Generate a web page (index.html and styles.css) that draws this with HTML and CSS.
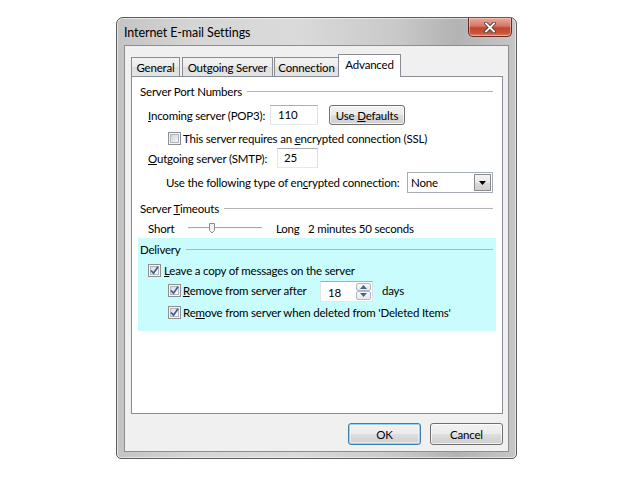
FILE: index.html
```html
<!DOCTYPE html>
<html lang="en">

<head>
    <meta charset="UTF-8">
    <meta name="viewport" content="width=device-width, initial-scale=1.0">
    <title>Internet E-mail Settings</title>
    <link rel="stylesheet" href="styles.css">
</head>

<body>
    <div class="window">
        <div class="titlebar">
            <span class="title">Internet E-mail Settings</span>
            <button type="button" class="close">
                <svg width="12" height="11" viewBox="0 0 12 11">
                    <path d="M2 1.5 L10 9.5 M10 1.5 L2 9.5" stroke="#4a3a38" stroke-width="3.6" stroke-linecap="square" fill="none" />
                    <path d="M2 1.5 L10 9.5 M10 1.5 L2 9.5" stroke="#ffffff" stroke-width="1.9" stroke-linecap="square" fill="none" />
                </svg>
            </button>
        </div>

        <div class="client">
            <div class="tabs">
                <div class="tab tab-general">General</div>
                <div class="tab tab-outgoing">Outgoing Server</div>
                <div class="tab tab-connection">Connection</div>
                <div class="tab tab-advanced active">Advanced</div>
            </div>

            <div class="page">
                <!-- ports -->
                <div class="section">
                    <div class="group-head"><span>Server Port Numbers</span></div>
                    <div class="row row-incoming ind1">
                        <label class="lbl-incoming"><u>I</u>ncoming server (POP3):</label>
                        <div class="textbox tb-incoming">110</div>
                        <button type="button" class="btn btn-defaults">Use <u>D</u>efaults</button>
                    </div>
                    <div class="row row-ssl ind2">
                        <span class="check"><span class="check-inner"></span></span>
                        <span class="check-text">This server requires an <u>e</u>ncrypted connection (SSL)</span>
                    </div>
                    <div class="row row-outgoing ind1">
                        <label class="lbl-outgoing"><u>O</u>utgoing server (SMTP):</label>
                        <div class="textbox tb-outgoing">25</div>
                    </div>
                    <div class="row row-enc ind3">
                        <label class="lbl-enc">Use the following type of en<u>c</u>rypted connection:</label>
                        <div class="select">
                            <span class="select-value">None</span>
                            <span class="select-btn">
                                <svg width="7" height="4" viewBox="0 0 7 4"><path d="M0 0 H7 L3.5 4 Z" fill="#000" /></svg>
                            </span>
                        </div>
                    </div>
                </div>

                <!-- timeouts -->
                <div class="section section-timeouts">
                    <div class="group-head"><span>Server <u>T</u>imeouts</span></div>
                    <div class="row row-slider ind1">
                        <span class="lbl-short">Short</span>
                        <span class="slider">
                            <svg width="74" height="14" viewBox="0 0 74 14">
                                <rect x="0" y="5" width="74" height="1" fill="#a7a7a7" />
                                <rect x="0" y="6" width="74" height="1" fill="#f4f4f4" />
                                <path d="M21.5 1.5 H26.5 V8.5 L24 11 L21.5 8.5 Z" fill="#f3f3f3" stroke="#8c8c8c" />
                            </svg>
                        </span>
                        <span class="lbl-long">Long</span>
                        <span>2 minutes 50 seconds</span>
                    </div>
                </div>

                <!-- delivery -->
                <div class="section section-delivery">
                    <div class="group-head"><span>Delivery</span></div>
                    <div class="row row-leave ind1">
                        <span class="check checked"><span class="check-inner">
                            <svg width="9" height="9" viewBox="0 0 9 9"><path d="M1 4.5 L3.5 7.2 L8 0.8" stroke="#3e5a8f" stroke-width="1.7" fill="none" /></svg>
                        </span></span>
                        <span class="check-text check-text-leave"><u>L</u>eave a copy of messages on the server</span>
                    </div>
                    <div class="row row-remove ind2">
                        <span class="check checked"><span class="check-inner">
                            <svg width="9" height="9" viewBox="0 0 9 9"><path d="M1 4.5 L3.5 7.2 L8 0.8" stroke="#3e5a8f" stroke-width="1.7" fill="none" /></svg>
                        </span></span>
                        <span class="check-text lbl-remove"><u>R</u>emove from server after</span>
                        <div class="spinner">
                            <span class="spinner-value">18</span>
                            <span class="spin-btns">
                                <span class="spin-btn"><svg width="7" height="4" viewBox="0 0 7 4"><path d="M0 4 H7 L3.5 0 Z" fill="#4d6185" /></svg></span>
                                <span class="spin-btn"><svg width="7" height="4" viewBox="0 0 7 4"><path d="M0 0 H7 L3.5 4 Z" fill="#4d6185" /></svg></span>
                            </span>
                        </div>
                        <span class="lbl-days">days</span>
                    </div>
                    <div class="row row-deleted ind2">
                        <span class="check checked"><span class="check-inner">
                            <svg width="9" height="9" viewBox="0 0 9 9"><path d="M1 4.5 L3.5 7.2 L8 0.8" stroke="#3e5a8f" stroke-width="1.7" fill="none" /></svg>
                        </span></span>
                        <span class="check-text">Re<u>m</u>ove from server when deleted from 'Deleted Items'</span>
                    </div>
                </div>
            </div>

            <div class="footer">
                <button type="button" class="btn btn-ok">OK</button>
                <button type="button" class="btn btn-cancel">Cancel</button>
            </div>
        </div>
    </div>
</body>

</html>
```

FILE: styles.css
```css
* {
    box-sizing: border-box;
}

body {
    margin: 0;
    padding: 17px 0 0 116px;
    background-color: #ffffff;
    font-family: Lato, "Liberation Sans", sans-serif;
    font-size: 11.5px;
    letter-spacing: -0.2px;
    color: #000;
    white-space: nowrap;
}

u {
    text-decoration: underline;
    text-underline-offset: 1px;
}

button {
    font-family: inherit;
    font-size: 11.5px;
    letter-spacing: -0.2px;
    color: #000;
    padding: 0;
}

/* window frame */
.window {
    width: 401px;
    height: 442px;
    border: 1px solid #5c5c5c;
    border-radius: 7px 7px 5px 5px;
    padding: 0 7px 6px 7px;
    background: linear-gradient(to right, #c4c4c4 0%, #d6d6d6 20%, #dadada 45%, #c9c9c9 70%, #b3b3b3 85%, #c6c6c6 100%);
    box-shadow: inset 0 0 0 1px rgba(255, 255, 255, 0.55);
    display: flex;
    flex-direction: column;
}

.titlebar {
    height: 27px;
    display: flex;
    align-items: flex-start;
}

.title {
    padding-top: 7px;
    font-size: 12.5px;
    letter-spacing: -0.1px;
    color: #000;
}

.close {
    margin-left: auto;
    margin-right: -3px;
    width: 44px;
    height: 19px;
    border: 1px solid #6a2b22;
    border-top: none;
    border-radius: 0 0 5px 5px;
    background: linear-gradient(to bottom, #e9a99b 0%, #d47866 45%, #c2452f 55%, #c8553c 85%, #de8d6f 100%);
    box-shadow: inset 0 0 0 1px rgba(255, 220, 210, 0.45);
    display: flex;
    align-items: center;
    justify-content: center;
}

.client {
    width: 385px;
    height: 407px;
    border: 1px solid #8d8d8d;
    background-color: #f0f0f0;
    padding: 8px 5px 0 6px;
}

/* tabs */
.tabs {
    display: flex;
    align-items: flex-end;
    height: 22px;
    position: relative;
    z-index: 1;
}

.tab {
    height: 19px;
    border: 1px solid #898c95;
    border-bottom: none;
    background: linear-gradient(to bottom, #f3f3f3 0%, #ebebeb 50%, #dedede 51%, #e5e5e5 100%);
    text-align: center;
    line-height: 18px;
    padding-top: 1px;
}

.tab-general {
    width: 49px;
}

.tab-outgoing {
    width: 91px;
    margin-left: 2px;
}

.tab-connection {
    width: 65px;
    margin-left: 1px;
}

.tab.active {
    width: 63px;
    height: 23px;
    margin-left: -1px;
    margin-bottom: -1px;
    background: #ffffff;
    line-height: 19px;
    padding-top: 0;
}

.page {
    width: 372px;
    height: 338px;
    border: 1px solid #898c95;
    background-color: #ffffff;
    padding: 6px 6px 0 6px;
}

.section {
    padding: 0 3px 0 2px;
}

.section-timeouts {
    margin-top: 7px;
}

.section-delivery {
    margin-top: 2px;
    padding-top: 3px;
    padding-bottom: 11px;
    background-color: #c9fdfd;
}

.group-head {
    height: 16px;
    display: flex;
    align-items: center;
}

.group-head::after {
    content: "";
    flex: 1;
    height: 1px;
    margin-left: 5px;
    background-color: #b4b4b4;
}

.row {
    display: flex;
    align-items: center;
}

.ind1 {
    padding-left: 8px;
}

.ind2 {
    padding-left: 28px;
}

.ind3 {
    padding-left: 26px;
}

.row-incoming {
    height: 22px;
    margin-top: 5px;
}

.row-ssl {
    height: 16px;
    margin-top: 4px;
}

.row-outgoing {
    height: 20px;
    margin-top: 2px;
}

.row-enc {
    height: 22px;
    margin-top: 3px;
}

.row-slider {
    height: 16px;
    margin-top: 4px;
}

.row-leave {
    height: 16px;
    margin-top: 5px;
}

.row-remove {
    height: 22px;
    margin-top: 1px;
}

.row-deleted {
    height: 16px;
    margin-top: 3px;
}

.lbl-incoming {
    width: 122px;
    flex-shrink: 0;
}

.lbl-outgoing {
    width: 129px;
    flex-shrink: 0;
}

.lbl-enc {
    width: 241px;
    flex-shrink: 0;
}

/* inputs */
.textbox {
    height: 20px;
    border: 1px solid;
    border-color: #abadb3 #dbdfe6 #e3e9ef #e2e3ea;
    background-color: #ffffff;
    padding-left: 7px;
    line-height: 18px;
}

.tb-incoming {
    width: 48px;
}

.tb-outgoing {
    width: 41px;
    padding-left: 6px;
}

.btn {
    height: 20px;
    border: 1px solid #707070;
    border-radius: 3px;
    background: linear-gradient(to bottom, #f2f2f2 0%, #ebebeb 50%, #dddddd 51%, #cfcfcf 100%);
    box-shadow: inset 0 0 0 1px rgba(255, 255, 255, 0.7);
    cursor: pointer;
}

.btn-defaults {
    width: 76px;
    margin-left: 11px;
}

.select {
    width: 87px;
    height: 21px;
    border: 1px solid #a5acb5;
    background-color: #ffffff;
    display: flex;
    align-items: center;
    padding: 0 1px 0 3px;
}

.select-value {
    flex: 1;
}

.select-btn {
    width: 17px;
    height: 17px;
    border: 1px solid #8b8b8b;
    background: linear-gradient(to bottom, #f4f4f4 0%, #e8e8e8 50%, #dadada 51%, #d0d0d0 100%);
    display: flex;
    align-items: center;
    justify-content: center;
}

.select-btn svg {
    margin-top: 1px;
}

/* checkbox */
.check {
    width: 13px;
    height: 13px;
    flex-shrink: 0;
    border: 1px solid #8e8f8f;
    background-color: #f6f6f6;
    padding: 1px;
    margin-right: 2px;
}

.check-inner {
    display: flex;
    width: 9px;
    height: 9px;
    border: 1px solid #b0b5bc;
    background: linear-gradient(135deg, #cdd1d7 0%, #e6e8eb 60%, #f7f7f7 100%);
    overflow: visible;
}

.check-inner svg {
    flex-shrink: 0;
    margin: -1px 0 0 -1px;
}

.checked .check-inner {
    background: linear-gradient(135deg, #d6dde8 0%, #eef1f6 60%, #fafbfc 100%);
}

.check-text-leave {
    margin-left: 1px;
}

/* slider */
.lbl-short {
    width: 40px;
}

.slider {
    display: flex;
    width: 74px;
    margin-right: 14px;
    margin-top: 1px;
}

.lbl-long {
    width: 32px;
}

/* spinner */
.lbl-remove {
    width: 137px;
    flex-shrink: 0;
}

.spinner {
    width: 53px;
    height: 21px;
    border: 1px solid;
    border-color: #abadb3 #dbdfe6 #e3e9ef #e2e3ea;
    background-color: #ffffff;
    display: flex;
    margin-top: 2px;
}

.spinner-value {
    flex: 1;
    padding-left: 7px;
    line-height: 21px;
}

.spin-btns {
    width: 16px;
    display: flex;
    flex-direction: column;
    padding: 1px 1px 1px 0;
}

.spin-btn {
    flex: 1;
    border: 1px solid #b2b9c4;
    border-radius: 2px;
    background: linear-gradient(to bottom, #f7f8fa 0%, #e4e8ee 100%);
    display: flex;
    align-items: center;
    justify-content: center;
}

.lbl-days {
    margin-left: 9px;
}

/* footer buttons */
.footer {
    display: flex;
    justify-content: flex-end;
    gap: 9px;
    margin-top: 9px;
}

.footer .btn {
    width: 73px;
    height: 22px;
}

.btn-ok {
    border-color: #3c7fb1;
    box-shadow: inset 0 0 0 1px #8fd6f7, inset 0 0 0 2px rgba(255, 255, 255, 0.5);
}
```
